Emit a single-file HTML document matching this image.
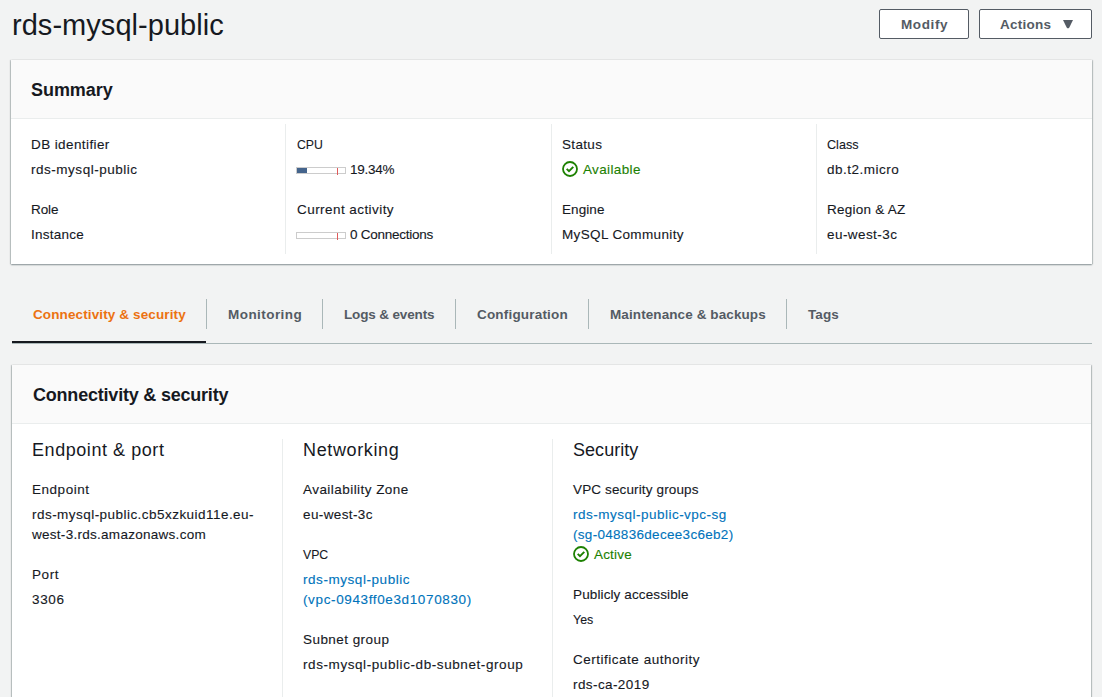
<!DOCTYPE html>
<html><head><meta charset="utf-8">
<style>
*{box-sizing:border-box;margin:0;padding:0}
html,body{width:1102px;height:697px;overflow:hidden}
body{background:#f2f3f3;font-family:"Liberation Sans",sans-serif;color:#16191f;font-size:13.5px;line-height:20px;position:relative}
.a{position:absolute;white-space:nowrap}
.s{-webkit-text-stroke:0.12px currentColor}
.title{font-size:29px;line-height:40px;color:#16191f}
.btn{position:absolute;top:9px;height:30px;border:1px solid #545b64;border-radius:2px;background:#fff}
.bt{font-weight:bold;color:#545b64;font-size:13.5px}
.panel{position:absolute;background:#fff;box-shadow:0 1px 1.5px 0 rgba(0,28,36,.42),1px 0 1px 0 rgba(0,28,36,.15),-1px 0 1px 0 rgba(0,28,36,.15)}
.ph{position:absolute;left:0;top:0;right:0;background:#fafafa;border-bottom:1px solid #eaeded}
.h2{font-size:18px;font-weight:bold;line-height:22px}
.vd{position:absolute;width:1px;background:#eaeded}
.tab{font-weight:bold;color:#545b64}
.act{color:#ec7211}
.tdiv{position:absolute;top:299px;width:1px;height:30px;background:#aab7b8}
.h3{font-size:18px;line-height:22px}
.link{color:#0073bb}
.ok{color:#1d8102}
.bar{position:absolute;width:50px;height:7px;border:1px solid #ccc;background:#fff}
.bar .f{position:absolute;left:0;top:0;height:5px;background:#44648c}
.bar .r{position:absolute;left:40px;top:0;width:1px;height:7px;background:#e05a5a}
</style></head><body>
<div class="btn" style="left:879px;width:90px"></div>
<div class="btn" style="left:979px;width:113px"><svg style="position:absolute;left:83px;top:10px" width="10" height="9" viewBox="0 0 10 9"><path d="M0 0H10L6.3 7.4Q5 9.2 3.7 7.4Z" fill="#545b64"/></svg></div>
<div class="panel" style="left:11px;top:60px;width:1081px;height:204px"><div class="ph" style="height:59px"></div><div class="vd" style="left:274px;top:64px;height:130px"></div><div class="vd" style="left:540px;top:64px;height:130px"></div><div class="vd" style="left:805px;top:64px;height:130px"></div></div>
<div class="bar" style="left:296px;top:167px"><div class="f" style="width:10px"></div><div class="r"></div></div>
<div class="bar" style="left:296px;top:232px"><div class="r"></div></div>
<svg style="position:absolute;left:562px;top:161px" width="16" height="16" viewBox="0 0 16 16"><path d="M4.7 7.9L7 10.1L11.3 5.9" fill="none" stroke="#1d8102" stroke-width="2"/><circle cx="8" cy="8" r="7" fill="none" stroke="#1d8102" stroke-width="1.8"/></svg>
<div style="position:absolute;left:12px;top:343px;width:1080px;height:1px;background:#aab7b8"></div>
<div style="position:absolute;left:12px;top:341px;width:194px;height:2px;background:#16191f"></div>
<div class="tdiv" style="left:206px"></div>
<div class="tdiv" style="left:322px"></div>
<div class="tdiv" style="left:455px"></div>
<div class="tdiv" style="left:588px"></div>
<div class="tdiv" style="left:786px"></div>
<div class="panel" style="left:12px;top:365px;width:1079px;height:400px"><div class="ph" style="height:59px"></div><div class="vd" style="left:270px;top:74px;height:400px"></div><div class="vd" style="left:540px;top:74px;height:400px"></div></div>
<svg style="position:absolute;left:573px;top:546px" width="16" height="16" viewBox="0 0 16 16"><path d="M4.7 7.9L7 10.1L11.3 5.9" fill="none" stroke="#1d8102" stroke-width="2"/><circle cx="8" cy="8" r="7" fill="none" stroke="#1d8102" stroke-width="1.8"/></svg>
<div class="a title" style="left:12px;top:5px;letter-spacing:0.040px">rds-mysql-public</div>
<div class="a bt" style="left:901px;top:15px;letter-spacing:0.600px">Modify</div>
<div class="a bt" style="left:1000px;top:15px;letter-spacing:0.233px">Actions</div>
<div class="a h2" style="left:31px;top:79px;letter-spacing:-0.050px">Summary</div>
<div class="a s" style="left:31px;top:135px;letter-spacing:0.400px">DB identifier</div>
<div class="a s" style="left:31px;top:160px;letter-spacing:0.520px">rds-mysql-public</div>
<div class="a s" style="left:31px;top:200px;letter-spacing:-0.100px">Role</div>
<div class="a s" style="left:31px;top:225px;letter-spacing:0.229px">Instance</div>
<div class="a s" style="left:297px;top:135px;transform:scaleX(0.9071);transform-origin:0px 0">CPU</div>
<div class="a s" style="left:350px;top:160px;letter-spacing:-0.240px">19.34%</div>
<div class="a s" style="left:297px;top:200px;letter-spacing:0.440px">Current activity</div>
<div class="a s" style="left:350px;top:225px;letter-spacing:-0.250px">0 Connections</div>
<div class="a s" style="left:562px;top:135px;letter-spacing:0.340px">Status</div>
<div class="a ok s" style="left:583px;top:160px;letter-spacing:0.362px">Available</div>
<div class="a s" style="left:562px;top:200px;letter-spacing:0.080px">Engine</div>
<div class="a s" style="left:562px;top:225px;letter-spacing:0.357px">MySQL Community</div>
<div class="a s" style="left:827px;top:135px;transform:scaleX(0.9324);transform-origin:0px 0">Class</div>
<div class="a s" style="left:827px;top:160px;letter-spacing:0.490px">db.t2.micro</div>
<div class="a s" style="left:827px;top:200px;letter-spacing:0.240px">Region &amp; AZ</div>
<div class="a s" style="left:827px;top:225px;letter-spacing:0.433px">eu-west-3c</div>
<div class="a tab act" style="left:33px;top:305px;letter-spacing:0.118px">Connectivity &amp; security</div>
<div class="a tab" style="left:228px;top:305px;letter-spacing:0.444px">Monitoring</div>
<div class="a tab" style="left:344px;top:305px;letter-spacing:-0.142px">Logs &amp; events</div>
<div class="a tab" style="left:477px;top:305px;letter-spacing:0.183px">Configuration</div>
<div class="a tab" style="left:610px;top:305px;letter-spacing:0.095px">Maintenance &amp; backups</div>
<div class="a tab" style="left:808px;top:305px;letter-spacing:0.067px">Tags</div>
<div class="a h2" style="left:33px;top:384px;letter-spacing:-0.209px">Connectivity &amp; security</div>
<div class="a h3" style="left:32px;top:439px;letter-spacing:0.557px">Endpoint &amp; port</div>
<div class="a s" style="left:32px;top:480px;letter-spacing:0.529px">Endpoint</div>
<div class="a s" style="left:32px;top:505px;letter-spacing:0.459px">rds-mysql-public.cb5xzkuid11e.eu-</div>
<div class="a s" style="left:32px;top:525px;letter-spacing:0.278px">west-3.rds.amazonaws.com</div>
<div class="a s" style="left:32px;top:565px;letter-spacing:0.567px">Port</div>
<div class="a s" style="left:32px;top:590px;letter-spacing:0.633px">3306</div>
<div class="a h3" style="left:303px;top:439px;letter-spacing:0.633px">Networking</div>
<div class="a s" style="left:303px;top:480px;letter-spacing:0.450px">Availability Zone</div>
<div class="a s" style="left:303px;top:505px;letter-spacing:0.378px">eu-west-3c</div>
<div class="a s" style="left:303px;top:545px;transform:scaleX(0.9071);transform-origin:0px 0">VPC</div>
<div class="a link s" style="left:303px;top:570px;letter-spacing:0.553px">rds-mysql-public</div>
<div class="a link s" style="left:303px;top:590px;letter-spacing:0.627px">(vpc-0943ff0e3d1070830)</div>
<div class="a s" style="left:303px;top:630px;letter-spacing:0.445px">Subnet group</div>
<div class="a s" style="left:303px;top:655px;letter-spacing:0.577px">rds-mysql-public-db-subnet-group</div>
<div class="a h3" style="left:573px;top:439px;letter-spacing:0.043px">Security</div>
<div class="a s" style="left:573px;top:480px;letter-spacing:0.133px">VPC security groups</div>
<div class="a link s" style="left:573px;top:505px;letter-spacing:0.491px">rds-mysql-public-vpc-sg</div>
<div class="a link s" style="left:573px;top:525px;letter-spacing:0.300px">(sg-048836decee3c6eb2)</div>
<div class="a ok s" style="left:594px;top:545px;letter-spacing:0.180px">Active</div>
<div class="a s" style="left:573px;top:585px;letter-spacing:0.122px">Publicly accessible</div>
<div class="a s" style="left:573px;top:610px;transform:scaleX(0.9182);transform-origin:0px 0">Yes</div>
<div class="a s" style="left:573px;top:650px;letter-spacing:0.510px">Certificate authority</div>
<div class="a s" style="left:573px;top:675px;letter-spacing:0.410px">rds-ca-2019</div>
</body></html>
